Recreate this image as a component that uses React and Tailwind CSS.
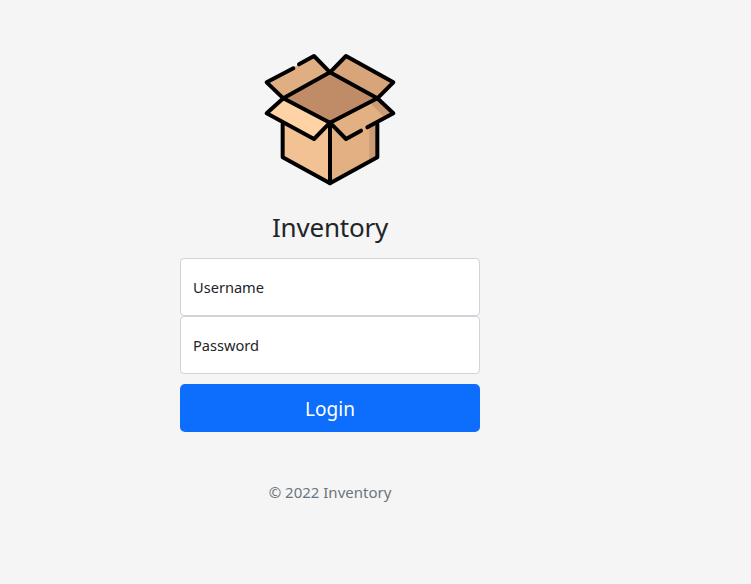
const ink = "#000";

function BoxLogo() {
  return (
    <svg viewBox="0 0 480 480" width="160" height="160" className="block mx-auto" strokeLinejoin="round" strokeLinecap="round">
      <polygon points="50,127 192,48 240,97 100,175" fill="#E0AE83" />
      <polygon points="240,97 288,48 430,127 382,175" fill="#D8A57A" />
      <polygon points="240,97 382,175 240,248 100,175" fill="#C08C68" />
      <polygon points="98,210 240,248 240,430 98,352" fill="#F2C194" />
      <polygon points="240,248 382,210 382,352 240,430" fill="#E2B083" />
      <polygon points="358,230 382,215 382,352 358,365" fill="#CC9A73" />
      <polygon points="100,175 240,248 192,297 50,220" fill="#FFD3A6" />
      <polygon points="382,175 430,220 288,297 240,248" fill="#E2B083" />
      <polygon points="382,175 430,220 405,234 360,188" fill="#CC9A73" />
      <g fill="none" stroke={ink} strokeWidth="12">
        <path d="M130 85 L50 127 L100 175 L240 97 L192 48 L147 73" />
        <path d="M240 97 L288 48 L430 127 L382 175 L240 97" />
        <path d="M100 175 L240 248 L382 175" />
        <path d="M100 175 L50 220 L192 297 L240 248 L288 297 L333 272" />
        <path d="M352 262 L430 220 L382 175" />
        <path d="M98 252 L98 352 L240 430 L382 352 L382 252" />
        <path d="M240 248 L240 430" />
      </g>
    </svg>
  );
}

export default function App() {
  return (
    <div className="min-h-[584px] bg-[#f5f5f5] text-[#212529]" style={{ fontFamily: '"Noto Sans", sans-serif' }}>
      <main className="w-[300px] ml-[180px] pt-10">
        <BoxLogo />
        <h1 className="mt-[10px] mb-[14px] text-center text-[26px] leading-[34px] font-normal tracking-[-0.2px]">Inventory</h1>
        <form className="flex flex-col">
          <input
            placeholder="Username"
            className="h-[58px] w-full rounded-[4px] border border-[#ced4da] bg-white px-3 text-[14.6px] outline-none placeholder:text-[#212529]"
          />
          <input
            type="password"
            placeholder="Password"
            className="h-[58px] w-full rounded-[4px] border border-[#ced4da] bg-white px-3 text-[14.6px] outline-none placeholder:text-[#212529]"
          />
          <button type="button" className="mt-[10px] h-[48px] w-full rounded-[5px] bg-[#0d6efd] pt-[2px] text-[19px] text-white">
            Login
          </button>
        </form>
        <p className="mt-[48px] text-center text-[15px] leading-6 text-[#6c757d]">© 2022 Inventory</p>
      </main>
    </div>
  );
}
